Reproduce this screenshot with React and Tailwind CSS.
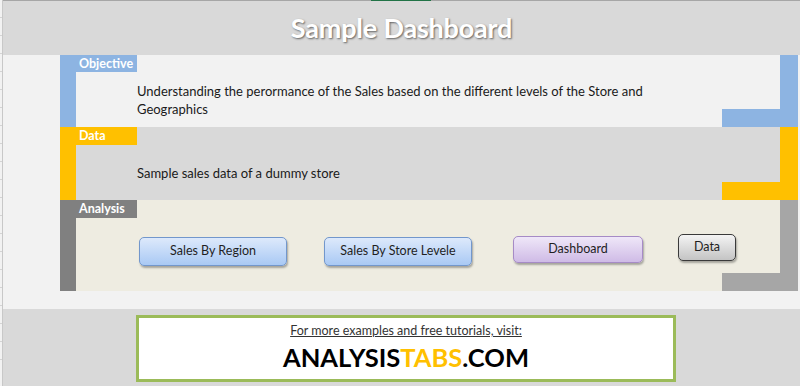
import React from 'react';

const font = "font-['Lato','Liberation_Sans',sans-serif]";

// One band of the dashboard: coloured bracket on the left, L-shaped bracket on the right
const Section = ({ h, label, labelH, left, right, bg, children }) => (
  <div className={`flex ${h}`}>
    <div className={`w-[16px] shrink-0 ${left}`} />
    <div className={`flex-1 min-w-0 flex flex-col ${bg}`}>
      <div className={`w-[61px] ${labelH} ${left} text-white font-bold text-[12.5px] leading-none flex items-center pl-[3px] pt-[1px]`}>
        {label}
      </div>
      <div className="flex-1 flex">
        <div className="flex-1 min-w-0">{children}</div>
        <div className="w-[58px] shrink-0 flex flex-col justify-end">
          <div className={`h-[18px] ${right}`} />
        </div>
      </div>
    </div>
    <div className={`w-[18px] shrink-0 ${right}`} />
  </div>
);

const Btn = ({ className, children }) => (
  <div className={`shrink-0 flex items-center justify-center rounded-[5px] border text-[12.5px] text-[#1f1f1f] shadow-[1px_2px_2px_rgba(0,0,0,0.3)] ${className}`}>
    {children}
  </div>
);

export default function App() {
  return (
    <div className={`w-[800px] h-[386px] bg-[#f2f2f2] flex overflow-hidden ${font}`}>
      {/* spreadsheet row headers edge */}
      <div className="w-[3px] shrink-0 border-r border-[#c8c8c8] flex flex-col">
        {Array.from({ length: 20 }).map((_, i) => (
          <div key={i} className="h-[18px] border-b border-[#d4d4d4]" />
        ))}
      </div>

      <div className="flex-1 min-w-0 flex flex-col">
        <div className="h-[1px] bg-[#a6a6a6] flex">
          <div className="ml-[368px] w-[60px] h-[2px] bg-[#217346]" />
        </div>
        <div className="h-[54px] bg-[#d9d9d9] flex items-center justify-center">
          <h1 className="text-white font-bold text-[27px] tracking-[-0.2px] [text-shadow:1px_1px_2px_rgba(0,0,0,0.55)]">
            Sample Dashboard
          </h1>
        </div>

        <div className="ml-[57px] mr-[2px] flex flex-col">
          <Section h="h-[72px]" label="Objective" labelH="h-[17px]" left="bg-[#8db4e2]" right="bg-[#8db4e2]" bg="bg-[#f2f2f2]">
            <p className="pl-[61px] pt-[10px] text-[13px] leading-[18px] text-[#1a1a1a] whitespace-nowrap">
              Understanding the perormance of the Sales based on the different levels of the Store and
              <br />
              Geographics
            </p>
          </Section>
          <Section h="h-[73px]" label="Data" labelH="h-[18px]" left="bg-[#ffc000]" right="bg-[#ffc000]" bg="bg-[#d9d9d9]">
            <p className="pl-[61px] pt-[19px] text-[13px] leading-[18px] text-[#1a1a1a]">
              Sample sales data of a dummy store
            </p>
          </Section>
          <Section h="h-[91px]" label="Analysis" labelH="h-[18px]" left="bg-[#808080]" right="bg-[#a6a6a6]" bg="bg-[#eeece1]">
            <div className="flex items-start pl-[63px]">
              <Btn className="mt-[19px] w-[148px] h-[29px] border-[#7297cc] bg-gradient-to-b from-[#dde9fb] to-[#a9c9f4]">
                Sales By Region
              </Btn>
              <Btn className="mt-[19px] ml-[37px] w-[148px] h-[29px] border-[#7297cc] bg-gradient-to-b from-[#dde9fb] to-[#a9c9f4]">
                Sales By Store Levele
              </Btn>
              <Btn className="mt-[18px] ml-[41px] w-[130px] h-[27px] border-[#a68bc6] bg-gradient-to-b from-[#efe7f8] to-[#cfbbe6]">
                Dashboard
              </Btn>
              <Btn className="mt-[16px] ml-[35px] w-[58px] h-[27px] border-[#3a3a3a] bg-gradient-to-b from-[#f4f4f4] to-[#c4c4c4]">
                Data
              </Btn>
            </div>
          </Section>
        </div>

        <div className="mt-[18px] flex-1 bg-[#d9d9d9] pl-[133px] pt-[6px]">
          <div className="w-[540px] h-[67px] bg-white border-[3px] border-[#9bbb59] flex flex-col items-center">
            <p className="mt-[5px] text-[12.5px] leading-[16px] underline text-[#333]">
              For more examples and free tutorials, visit:
            </p>
            <p className="mt-[3px] text-[25.5px] leading-[30px] font-bold text-black">
              ANALYSIS<span className="text-[#ffc000]">TABS</span>.COM
            </p>
          </div>
        </div>
      </div>
    </div>
  );
}
